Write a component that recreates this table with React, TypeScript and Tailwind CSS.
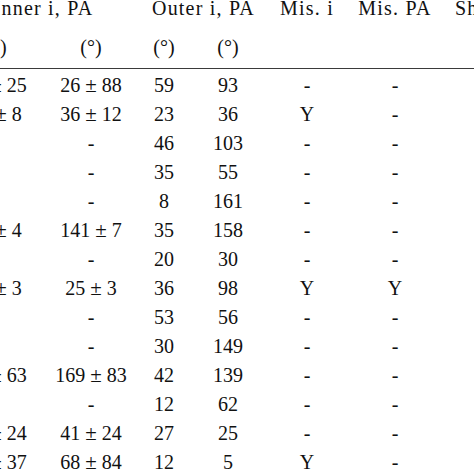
import React from "react";

const rows: string[][] = [
  ["24 ± 25", "26 ± 88", "59", "93", "-", "-"],
  ["38 ± 8", "36 ± 12", "23", "36", "Y", "-"],
  ["", "-", "46", "103", "-", "-"],
  ["", "-", "35", "55", "-", "-"],
  ["", "-", "8", "161", "-", "-"],
  ["33 ± 4", "141 ± 7", "35", "158", "-", "-"],
  ["", "-", "20", "30", "-", "-"],
  ["39 ± 3", "25 ± 3", "36", "98", "Y", "Y"],
  ["", "-", "53", "56", "-", "-"],
  ["", "-", "30", "149", "-", "-"],
  ["46 ± 63", "169 ± 83", "42", "139", "-", "-"],
  ["", "-", "12", "62", "-", "-"],
  ["29 ± 24", "41 ± 24", "27", "25", "-", "-"],
  ["41 ± 37", "68 ± 84", "12", "5", "Y", "-"],
];

const widths = ["w-[92px]", "w-[98px]", "w-[48px]", "w-[80px]", "w-[78px]", "w-[98px]"];

function Cell({ text }: { text: string }) {
  if (text.includes(" ± ")) {
    const [a, b] = text.split(" ± ");
    return (
      <>
        {a}
        <span className="mx-[5px] text-[21px]">±</span>
        {b}
      </>
    );
  }
  return <>{text}</>;
}

export default function App() {
  return (
    <div className="w-[474px] h-[474px] overflow-hidden bg-white relative">
      <div
        className="ml-[-50px] mt-[-6px] w-[560px] text-[20px] text-[#111111]"
        style={{ fontFamily: '"Liberation Serif", "Times New Roman", serif' }}
      >
        <div className="flex h-[29px] leading-[29px] whitespace-nowrap tracking-[1.2px]">
          <div className="w-[187px] text-center">Inner i, PA</div>
          <div className="w-[133px] text-center">Outer i, PA</div>
          <div className="w-[74px] text-center">Mis. i</div>
          <div className="w-[102px] text-center">Mis. PA</div>
          <div className="pl-[9px]">Shape</div>
        </div>
        <div className="flex h-[29px] leading-[29px] mt-[10px] whitespace-nowrap">
          <div className={`${widths[0]} text-center`}>(°)</div>
          <div className={`${widths[1]} text-center`}>(°)</div>
          <div className={`${widths[2]} text-center`}>(°)</div>
          <div className={`${widths[3]} text-center`}>(°)</div>
          <div className={`${widths[4]} text-center`}></div>
          <div className={`${widths[5]} text-center`}></div>
        </div>
        <div className="mt-[6px] h-[1px] bg-[#3a3a3a]" />
        <div className="mt-[2px]">
          {rows.map((r, i) => (
            <div key={i} className="flex h-[29px] leading-[29px] whitespace-nowrap">
              {r.map((c, j) => (
                <div key={j} className={`${widths[j]} text-center`}>
                  <Cell text={c} />
                </div>
              ))}
            </div>
          ))}
        </div>
      </div>
    </div>
  );
}
